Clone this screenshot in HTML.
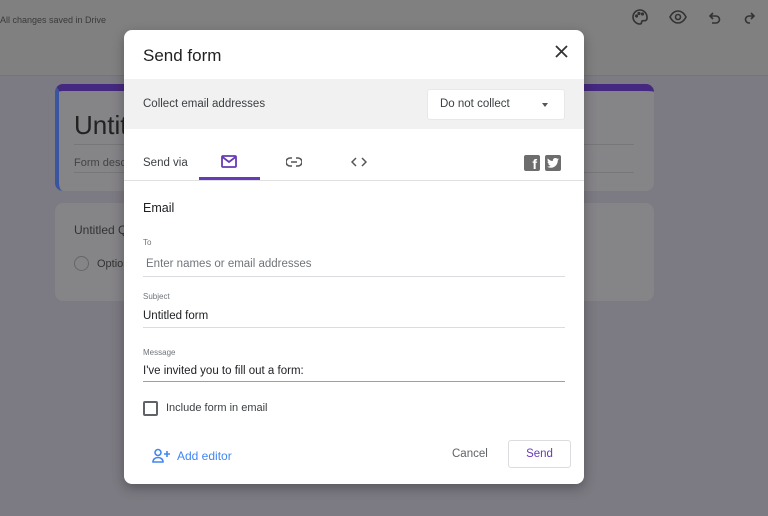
<!DOCTYPE html>
<html><head><style>
*{margin:0;padding:0;box-sizing:border-box}
body{width:768px;height:516px;overflow:hidden;position:relative;background:#7c7a82;font-family:"Liberation Sans",sans-serif;color:#202124}
.a{position:absolute}
.hdr{left:0;top:0;width:768px;height:76px;background:#808080;border-bottom:1px solid #757575}
.card{background:#858487;border-radius:8px}
.lbl{font-size:8px;color:#70757a}
.val{font-size:12px;color:#202124}
.line{height:1px;background:#dadce0}
</style></head><body>
<div class="a hdr"></div>
<div class="a" style="left:0;top:15px;font-size:9px;color:#3a3a3a">All changes saved in Drive</div>
<svg class="a" style="left:630px;top:8px" width="130" height="18" viewBox="0 0 130 18" fill="none" stroke="#333" stroke-width="1.6">
<path d="M10 2a7 7 0 1 0 0 14c1 0 1.5-.7 1.5-1.5 0-1.3 1-1.8 2-1.8h1.5A3 3 0 0 0 17 9.5C17 5.4 14 2 10 2z"/>
<circle cx="6.5" cy="8" r=".8"/><circle cx="9" cy="5.5" r=".8"/><circle cx="12.5" cy="6" r=".8"/>
<path d="M40 9c2-4 5-6 8-6s6 2 8 6c-2 4-5 6-8 6s-6-2-8-6z"/><circle cx="48" cy="9" r="2.5"/>
<path d="M83 5l-3 3 3 3M80 8h6a3 3 0 0 1 0 7h-4"/>
<path d="M121 5l3 3-3 3M124 8h-5a3 3 0 0 0 0 7h1"/>
</svg>
<div class="a card" style="left:55px;top:84px;width:599px;height:107px;border-top:7px solid #45287f;border-left:4px solid #3a55a0"></div>
<div class="a" style="left:74px;top:110px;font-size:26px;color:#222">Untitled form</div>
<div class="a" style="left:74px;top:144px;width:560px;height:1px;background:#777"></div>
<div class="a" style="left:74px;top:157px;font-size:11px;color:#444">Form description</div>
<div class="a" style="left:74px;top:172px;width:560px;height:1px;background:#777"></div>
<div class="a card" style="left:55px;top:203px;width:599px;height:98px"></div>
<div class="a" style="left:74px;top:223px;font-size:12px;color:#333">Untitled Question</div>
<div class="a" style="left:74px;top:256px;width:15px;height:15px;border:1.5px solid #666;border-radius:50%"></div>
<div class="a" style="left:97px;top:258px;font-size:11px;color:#333">Option 1</div>

<div class="a" style="left:124px;top:30px;width:460px;height:454px;background:#fff;border-radius:8px;box-shadow:0 4px 12px rgba(0,0,0,.3);overflow:hidden">
 <div class="a" style="left:19px;top:16px;font-size:17px;color:#202124">Send form</div>
 <svg class="a" style="left:431px;top:15px" width="13" height="13" viewBox="0 0 13 13" stroke="#333" stroke-width="1.8"><path d="M1 1l11 11M12 1L1 12"/></svg>
 <div class="a" style="left:0;top:49px;width:460px;height:50px;background:#f1f1f1"></div>
 <div class="a" style="left:19px;top:68px;font-size:11.5px;color:#3c4043">Collect email addresses</div>
 <div class="a" style="left:303px;top:59px;width:138px;height:31px;background:#fff;border:1px solid #e8e8e8;border-radius:3px"></div>
 <div class="a" style="left:316px;top:68px;font-size:11.5px;color:#3c4043">Do not collect</div>
 <div class="a" style="left:418px;top:73px;width:0;height:0;border-left:3.5px solid transparent;border-right:3.5px solid transparent;border-top:4px solid #555"></div>
 <div class="a" style="left:19px;top:127px;font-size:11.5px;color:#3c4043">Send via</div>
 <svg class="a" style="left:97px;top:125px" width="16" height="13" viewBox="0 0 16 13" fill="none" stroke="#673ab7" stroke-width="1.8"><rect x="1" y="1" width="14" height="11" rx="1"/><path d="M1.5 2l6.5 5 6.5-5"/></svg>
 <div class="a" style="left:75px;top:147px;width:61px;height:3px;background:#673ab7"></div>
 <svg class="a" style="left:162px;top:127px" width="16" height="10" viewBox="0 0 16 10" fill="none" stroke="#555" stroke-width="1.6"><path d="M6 1H4a4 4 0 0 0 0 8h2M10 1h2a4 4 0 0 1 0 8h-2M5 5h6"/></svg>
 <svg class="a" style="left:227px;top:127px" width="16" height="10" viewBox="0 0 16 10" fill="none" stroke="#555" stroke-width="1.5"><path d="M5 1L1 5l4 4M11 1l4 4-4 4"/></svg>
 <div class="a" style="left:400px;top:125px;width:16px;height:16px;background:#6d6d6d;border-radius:2px;color:#fff;font-weight:bold;font-size:14px;text-align:right;padding-right:3px;line-height:18px">f</div>
 <div class="a" style="left:421px;top:125px;width:16px;height:16px;background:#6d6d6d;border-radius:2px"></div>
 <svg class="a" style="left:423px;top:128px" width="12" height="10" viewBox="0 0 24 20"><path fill="#fff" d="M24 2.4a10 10 0 0 1-2.8.8A5 5 0 0 0 23.3.4a10 10 0 0 1-3.1 1.2A4.9 4.9 0 0 0 11.8 6 14 14 0 0 1 1.7.9a4.9 4.9 0 0 0 1.5 6.6A4.9 4.9 0 0 1 1 6.9a4.9 4.9 0 0 0 3.9 4.8 5 5 0 0 1-2.2.1 4.9 4.9 0 0 0 4.6 3.4A9.9 9.9 0 0 1 0 17.3 14 14 0 0 0 7.5 19.5c9 0 14-7.5 14-14v-.6A10 10 0 0 0 24 2.4z"/></svg>
 <div class="a line" style="left:0;top:150px;width:460px;background:#e0e0e0"></div>
 <div class="a" style="left:19px;top:171px;font-size:12.5px;color:#202124">Email</div>
 <div class="a lbl" style="left:19px;top:208px">To</div>
 <div class="a" style="left:22px;top:228px;font-size:11.5px;color:#70757a">Enter names or email addresses</div>
 <div class="a line" style="left:19px;top:246px;width:422px"></div>
 <div class="a lbl" style="left:19px;top:262px">Subject</div>
 <div class="a val" style="left:19px;top:280px;font-size:11.5px">Untitled form</div>
 <div class="a line" style="left:19px;top:297px;width:422px"></div>
 <div class="a lbl" style="left:19px;top:318px">Message</div>
 <div class="a val" style="left:19px;top:335px;font-size:11.5px">I've invited you to fill out a form:</div>
 <div class="a line" style="left:19px;top:351px;width:422px;background:#9aa0a6"></div>
 <div class="a" style="left:19px;top:371px;width:15px;height:15px;border:2px solid #5f6368;border-radius:2px"></div>
 <div class="a" style="left:42px;top:372px;font-size:11px;color:#3c4043">Include form in email</div>
 <svg class="a" style="left:28px;top:418px" width="20" height="15" viewBox="0 0 20 15" fill="none" stroke="#4285f4" stroke-width="1.6"><circle cx="6" cy="4.5" r="3"/><path d="M1 14c0-3 2.5-4.5 5-4.5s5 1.5 5 4.5zM15 3v6M12 6h6"/></svg>
 <div class="a" style="left:53px;top:419px;font-size:12px;color:#4285f4">Add editor</div>
 <div class="a" style="left:328px;top:418px;font-size:11.5px;color:#5f6368">Cancel</div>
 <div class="a" style="left:384px;top:410px;width:63px;height:28px;border:1px solid #dadce0;border-radius:3px;font-size:11.5px;color:#673ab7;text-align:center;line-height:26px">Send</div>
</div>
</body></html>
